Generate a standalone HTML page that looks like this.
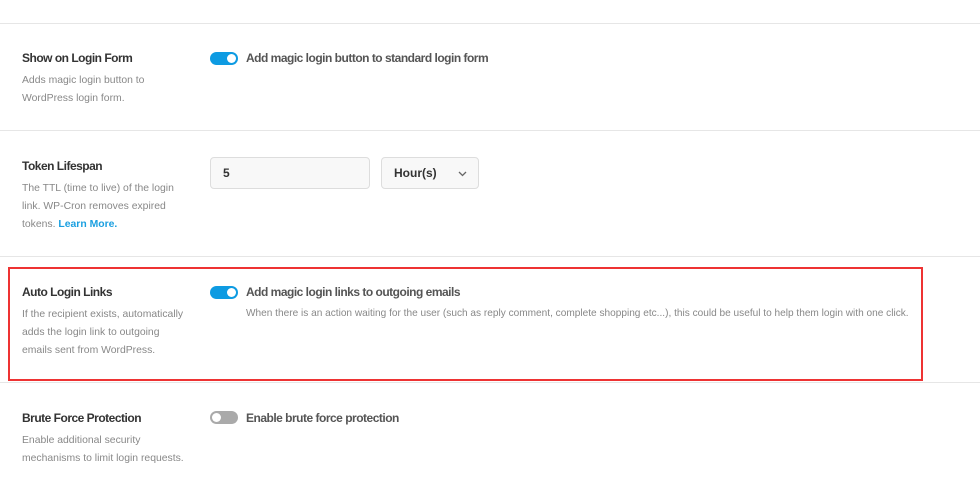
<!DOCTYPE html>
<html><head><meta charset="utf-8"><style>
*{margin:0;padding:0;box-sizing:border-box}
body{width:980px;height:490px;background:#fff;font-family:"Liberation Sans",Arial,sans-serif;position:relative;overflow:hidden;color:#333}
.hr{position:absolute;left:0;width:980px;height:1px;background:#e6e6e6}
.t{position:absolute;left:22px;font-size:12px;font-weight:bold;color:#333;letter-spacing:-0.5px}
.d{position:absolute;left:22px;font-size:10.4px;line-height:18px;color:#888;width:165px}
.tg{position:absolute;left:210px;width:28px;height:13px;border-radius:7px;background:#0e9be2}
.tg::after{content:"";position:absolute;right:2px;top:2px;width:9px;height:9px;border-radius:50%;background:#fff}
.tg.off{background:#aaa}
.tg.off::after{left:2px;right:auto}
.l{position:absolute;left:246px;font-size:12px;font-weight:bold;color:#555;letter-spacing:-0.5px;white-space:nowrap}
a{color:#1a9fe0;text-decoration:none;font-weight:bold}
</style></head><body>
<div class="hr" style="top:23px"></div>
<div class="t" style="top:51px">Show on Login Form</div>
<div class="d" style="top:72px;width:140px">Adds magic login button to WordPress login form.</div>
<div class="tg" style="top:52px"></div>
<div class="l" style="top:51px">Add magic login button to standard login form</div>
<div class="hr" style="top:130px"></div>
<div class="t" style="top:159px">Token Lifespan</div>
<div class="d" style="top:180px;width:155px">The TTL (time to live) of the login link. WP-Cron removes expired tokens. <a>Learn More.</a></div>
<div style="position:absolute;left:210px;top:157px;width:160px;height:32px;background:#f8f8f8;border:1px solid #ddd;border-radius:4px;font-size:12px;font-weight:bold;padding:8px 0 0 12px;color:#333">5</div>
<div style="position:absolute;left:381px;top:157px;width:98px;height:32px;background:#f8f8f8;border:1px solid #ddd;border-radius:4px;font-size:12px;font-weight:bold;padding:8px 0 0 12px;color:#333">Hour(s)<svg style="position:absolute;left:76px;top:13px" width="9" height="6" viewBox="0 0 9 6"><path d="M1 1l3.5 3.5L8 1" fill="none" stroke="#666" stroke-width="1.3"/></svg></div>
<div class="hr" style="top:256px"></div>
<div style="position:absolute;left:8px;top:267px;width:915px;height:114px;border:2px solid #ee3333"></div>
<div class="t" style="top:285px">Auto Login Links</div>
<div class="d" style="top:306px;width:165px">If the recipient exists, automatically adds the login link to outgoing emails sent from WordPress.</div>
<div class="tg" style="top:286px"></div>
<div class="l" style="top:285px">Add magic login links to outgoing emails</div>
<div class="l" style="top:308px;font-size:10.1px;font-weight:normal;color:#888;letter-spacing:0">When there is an action waiting for the user (such as reply comment, complete shopping etc...), this could be useful to help them login with one click.</div>
<div class="hr" style="top:382px"></div>
<div class="t" style="top:411px">Brute Force Protection</div>
<div class="d" style="top:432px">Enable additional security mechanisms to limit login requests.</div>
<div class="tg off" style="top:411px"></div>
<div class="l" style="top:411px">Enable brute force protection</div>
</body></html>
